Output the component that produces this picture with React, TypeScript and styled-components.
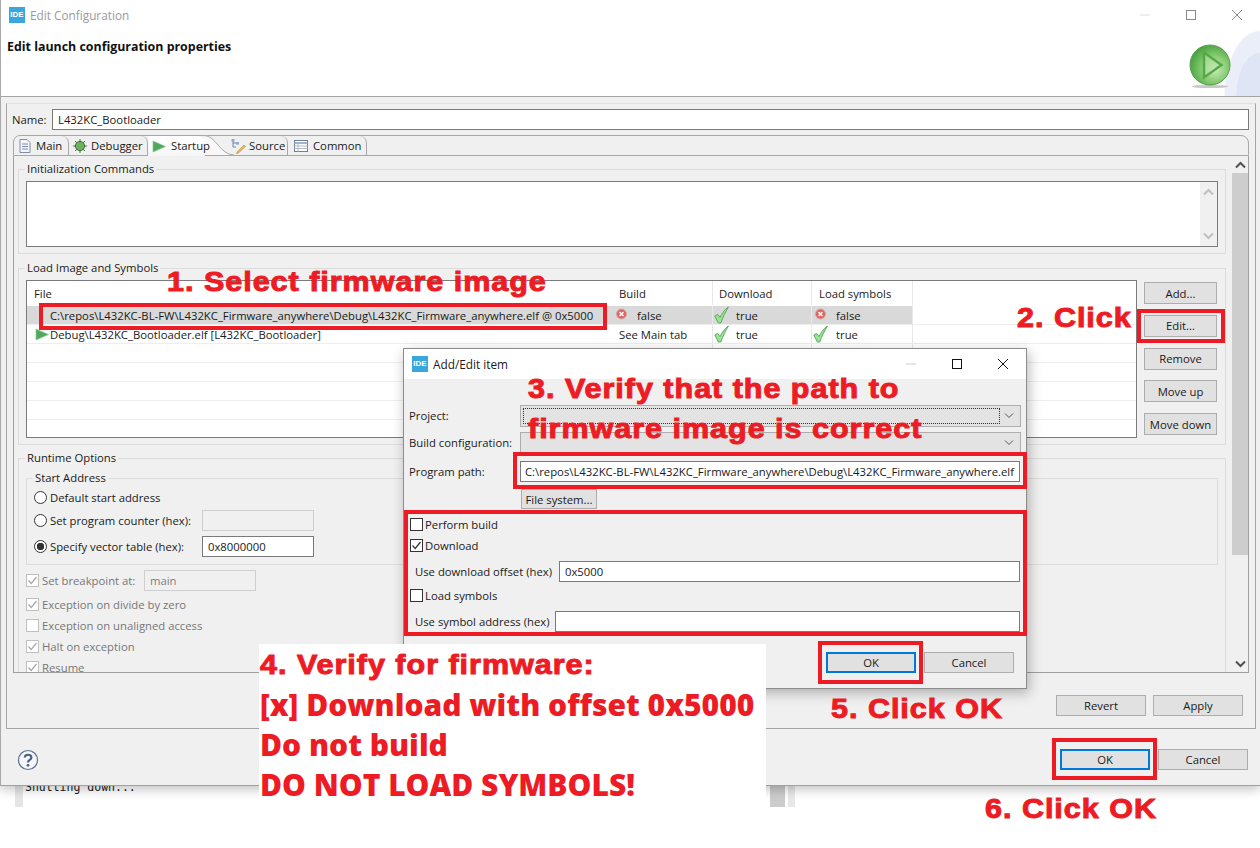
import React from 'react';
import styled, { createGlobalStyle } from 'styled-components';

const GlobalStyle = createGlobalStyle`
  html, body { margin: 0; padding: 0; background: #fff; }
  * { box-sizing: border-box; }
`;

const Page = styled.div`
  position: relative;
  width: 1260px;
  height: 848px;
  overflow: hidden;
  background: #fff;
  color: #1a1a1a;
  font-family: "Open Sans", "Liberation Sans", sans-serif;
  font-size: 11.3px;
`;

/* ---- what shows behind the window ---- */
const BackStrip = styled.div<{ $x: number; $w: number; $c: string }>`
  position: absolute;
  left: ${p => p.$x}px;
  top: 780px;
  width: ${p => p.$w}px;
  height: 27px;
  background: ${p => p.$c};
`;

const ConsoleText = styled.div`
  position: absolute;
  left: 25px;
  top: 780px;
  font-family: "DejaVu Sans Mono", monospace;
  font-size: 11.5px;
  line-height: 15px;
`;

/* ---- main window ---- */
const Window = styled.div`
  position: absolute;
  left: 0;
  top: 0;
  width: 1260px;
  height: 786px;
  display: flex;
  flex-direction: column;
  background: #fff;
  border-left: 1px solid #a8a8a8;
  border-bottom: 1px solid #a0a0a0;
  box-shadow: 0 4px 10px rgba(0, 0, 0, 0.22);
`;

const TitleBar = styled.div<{ $h: number }>`
  height: ${p => p.$h}px;
  flex: none;
  display: flex;
  align-items: center;
  background: #fff;
`;

const AppBadge = styled.div`
  width: 16px;
  height: 16px;
  flex: none;
  margin-left: 8px;
  background: #3aa7dc;
  color: #fff;
  font-family: "Liberation Sans", sans-serif;
  font-size: 8px;
  font-weight: 700;
  line-height: 16px;
  text-align: center;
`;

const TitleText = styled.span<{ $dim?: boolean }>`
  margin-left: 5px;
  flex: 1;
  color: ${p => (p.$dim ? '#9a9a9a' : '#1a1a1a')};
  font-size: 11.8px;
`;

const WinButton = styled.svg`
  width: 46px;
  height: 16px;
  flex: none;
`;

const Banner = styled.div`
  height: 67px;
  flex: none;
  display: flex;
  justify-content: space-between;
  padding: 9px 28px 0 6px;
  border-bottom: 1px solid #a4a4a4;
  background:
    radial-gradient(ellipse 36px 66px at 100% 100%, #dfe5f4 0 65%, #eaeef8 66% 97%, #fff 100%);
`;

const BannerTitle = styled.div`
  font-weight: 700;
  font-size: 12.4px;
  line-height: 16px;
  color: #111;
`;

const Body = styled.div`
  flex: 1;
  display: flex;
  flex-direction: column;
  background: #f0f0f0;
  padding: 6px 0 0 5px;
`;

const OuterPanel = styled.div`
  width: 1250px;
  height: 626px;
  flex: none;
  display: flex;
  flex-direction: column;
  padding: 5px 6px 0;
  border: 1px solid #a4a4a4;
  border-top-color: #e0e0e0;
`;

const NameRow = styled.div`
  display: flex;
  align-items: center;
  height: 21px;
  margin-bottom: 5px;
`;

const NameLabel = styled.span`
  width: 40px;
  margin-left: -1px;
  flex: none;
`;

const TextField = styled.div<{ $w?: number; $h?: number; $off?: boolean }>`
  ${p => (p.$w ? `width: ${p.$w}px; flex: none;` : 'flex: 1;')}
  height: ${p => p.$h ?? 21}px;
  padding: 0 5px;
  display: flex;
  align-items: center;
  white-space: nowrap;
  overflow: hidden;
  background: ${p => (p.$off ? '#f0f0f0' : '#fff')};
  border: 1px solid ${p => (p.$off ? '#cfcfcf' : '#7a7a7a')};
  color: ${p => (p.$off ? '#7d7d7d' : '#1a1a1a')};
`;

/* ---- tabs ---- */
const TabStrip = styled.div`
  height: 21px;
  flex: none;
  display: flex;
  border: 1px solid #a8a8a8;
  border-radius: 7px 8px 0 0;
  background: #f0f0f0;
`;

const Tab = styled.div<{ $w: number; $pad: number; $gap: number; $active?: boolean }>`
  position: relative;
  width: ${p => p.$w}px;
  flex: none;
  display: flex;
  align-items: center;
  gap: ${p => p.$gap}px;
  padding-left: ${p => p.$pad}px;
  padding-bottom: ${p => (p.$active ? 1 : 0)}px;
  border-right: 1px solid ${p => (p.$active ? 'transparent' : '#a8a8a8')};
  border-radius: 0 7px 0 0;
  height: ${p => (p.$active ? 20 : 19)}px;
  white-space: nowrap;
  background: ${p => (p.$active ? 'linear-gradient(#fff, #f6f6f6)' : 'transparent')};
`;

const TabLabel = styled.span`
  position: relative;
  z-index: 2;
`;

const TabCurve = styled.svg`
  position: absolute;
  left: 100%;
  top: -1px;
  width: 30px;
  height: 21px;
  z-index: 1;
`;

const TabIcon = styled.svg`
  width: 16px;
  height: 16px;
  flex: none;
  position: relative;
  z-index: 2;
`;

const Folder = styled.div`
  flex: none;
  height: 517px;
  display: flex;
  border: 1px solid #a0a0a0;
  border-top: 0;
`;

const Scroller = styled.div`
  flex: 1;
  min-width: 0;
  height: 516px;
  overflow: hidden;
  padding: 5px 6px 0 4px;
  display: flex;
  flex-direction: column;
`;

const Group = styled.fieldset<{ $h?: number; $gap?: number }>`
  margin: ${p => p.$gap ?? 0}px 0 0;
  padding: 0 7px;
  min-width: 0;
  flex: none;
  ${p => (p.$h ? `height: ${p.$h}px;` : '')}
  border: 1px solid #dcdcdc;
`;

const Legend = styled.legend`
  margin-left: -1px;
  padding: 0 2px;
  line-height: 16px;
  font-size: 11.3px;
`;

const CommandBox = styled.div`
  height: 66px;
  margin-top: 4px;
  display: flex;
  justify-content: flex-end;
  background: #fff;
  border: 1px solid #7a7a7a;
`;

const SmallBar = styled.div`
  width: 17px;
  display: flex;
  flex-direction: column;
  justify-content: space-between;
  align-items: center;
  padding: 6px 0;
  background: #f0f0f0;
`;

const Arrow = styled.svg`
  width: 11px;
  height: 8px;
  display: block;
`;

const MainBar = styled.div`
  width: 16px;
  flex: none;
  display: flex;
  flex-direction: column;
  align-items: stretch;
  background: #f0f0f0;
`;

const BarEnd = styled.div<{ $bottom?: boolean }>`
  height: 17px;
  display: flex;
  align-items: center;
  justify-content: center;
  ${p => (p.$bottom ? 'margin-top: auto;' : '')}
`;

const BarThumb = styled.div`
  height: 382px;
  background: #cdcdcd;
`;

/* ---- load image table ---- */
const LoadArea = styled.div`
  display: flex;
  gap: 7px;
  margin-top: 4px;
  padding-bottom: 6px;
`;

const Table = styled.div`
  width: 1111px;
  height: 158px;
  flex: none;
  overflow: hidden;
  background: #fff;
  border: 1px solid #7a7a7a;
`;

const TableRow = styled.div<{ $h?: number }>`
  height: ${p => p.$h ?? 19}px;
  display: grid;
  grid-template-columns: 585px 101px 99px 101px 1fr;
  border-bottom: 1px solid ${p => (p.$h ? 'transparent' : '#eeeeee')};
`;

const Cell = styled.div<{ $pad?: number; $gap?: number; $selected?: boolean; $noLine?: boolean }>`
  display: flex;
  align-items: center;
  gap: ${p => p.$gap ?? 7}px;
  padding-left: ${p => p.$pad ?? 6}px;
  white-space: nowrap;
  overflow: hidden;
  background: ${p => (p.$selected ? '#d9d9d9' : 'transparent')};
  border-right: 1px solid ${p => (p.$noLine ? 'transparent' : '#e8e8e8')};
`;

const StateIcon = styled.svg`
  width: 15px;
  height: 18px;
  flex: none;
`;

const ButtonColumn = styled.div`
  display: flex;
  flex-direction: column;
  gap: 10.8px;
  margin-top: 2px;
`;

const Button = styled.button<{ $w?: number; $focus?: boolean }>`
  width: ${p => p.$w ?? 90}px;
  height: ${p => (p.$w === 73 ? 22 : 21)}px;
  padding: 0;
  flex: none;
  font: inherit;
  color: #1a1a1a;
  background: #e1e1e1;
  border: ${p => (p.$focus ? '2px solid #0078d7' : '1px solid #adadad')};
`;

/* ---- runtime options ---- */
const InnerGroup = styled.fieldset`
  margin: 4px 0 0;
  padding: 3px 7px 7px;
  min-width: 0;
  border: 1px solid #dcdcdc;
  display: flex;
  flex-direction: column;
  gap: 5px;
`;

const OptionRow = styled.div<{ $tall?: boolean; $off?: boolean }>`
  display: flex;
  align-items: center;
  height: ${p => (p.$tall ? 21 : 16)}px;
  flex: none;
  color: ${p => (p.$off ? '#777' : 'inherit')};
`;

const Radio = styled.span<{ $on?: boolean }>`
  width: 13px;
  height: 13px;
  flex: none;
  margin-right: 3px;
  border-radius: 50%;
  border: 1px solid #333;
  background: ${p => (p.$on ? 'radial-gradient(circle, #333 0 3.5px, #fff 4px)' : '#fff')};
`;

const Check = styled.span<{ $off?: boolean; $gap?: number }>`
  width: 13px;
  height: 13px;
  flex: none;
  margin-right: ${p => p.$gap ?? 3}px;
  display: flex;
  align-items: center;
  justify-content: center;
  background: #fff;
  border: 1px solid ${p => (p.$off ? '#c0c0c0' : '#333')};
`;

const CheckMark = styled.svg`
  width: 11px;
  height: 11px;
`;

const OptionLabel = styled.span<{ $w?: number }>`
  white-space: nowrap;
  ${p => (p.$w ? `width: ${p.$w}px; flex: none;` : '')}
`;

const ChecksBlock = styled.div`
  margin-top: 5px;
  display: flex;
  flex-direction: column;
  gap: 5px;
`;

const ActionRow = styled.div`
  display: flex;
  justify-content: flex-end;
  gap: 7px;
  margin-top: 22px;
  padding-right: 6px;
`;

const Footer = styled.div`
  margin-top: 20px;
  display: flex;
  justify-content: space-between;
  align-items: center;
  padding: 0 12px 0 11px;
  height: 21px;
`;

const HelpIcon = styled.svg`
  width: 22px;
  height: 22px;
`;

const FooterButtons = styled.div`
  display: flex;
  gap: 8px;
`;

/* ---- add/edit dialog ---- */
const Dialog = styled.div`
  position: absolute;
  left: 403px;
  top: 348px;
  width: 624px;
  height: 341px;
  display: flex;
  flex-direction: column;
  background: #f0f0f0;
  border: 1px solid #8c8c8c;
  box-shadow: 2px 4px 12px rgba(0, 0, 0, 0.28);
`;

const DialogForm = styled.div`
  display: grid;
  grid-template-columns: 111px 1fr;
  padding: 26px 5px 0 5px;
  align-items: center;
`;

const FormLabel = styled.span<{ $h: number; $gap?: number }>`
  height: ${p => p.$h}px;
  margin-bottom: ${p => p.$gap ?? 0}px;
  padding-bottom: 1px;
  display: flex;
  align-items: center;
  white-space: nowrap;
`;

const Combo = styled.div<{ $h: number; $gap: number }>`
  height: ${p => p.$h}px;
  margin-bottom: ${p => p.$gap}px;
  display: flex;
  align-items: center;
  padding: 2px;
  background: #e3e3e3;
  border: 1px solid #adadad;
`;

const ComboFocus = styled.div<{ $dotted?: boolean }>`
  flex: 1;
  align-self: stretch;
  border: 1px ${p => (p.$dotted ? 'dotted #333' : 'solid transparent')};
`;

const ComboArrow = styled.svg`
  width: 18px;
  height: 8px;
  flex: none;
`;

const PathField = styled(TextField)`
  margin-bottom: 7px;
  margin-right: 1px;
  padding: 0 4px;
`;

const FileButton = styled.button`
  grid-column: 2;
  width: 76px;
  height: 20px;
  padding: 0;
  font: inherit;
  color: #1a1a1a;
  background: #e1e1e1;
  border: 1px solid #adadad;
  margin-left: 1px;
`;

const DialogOptions = styled.div`
  margin-top: 7px;
  padding: 0 6px;
  display: flex;
  flex-direction: column;
  gap: 5px;
`;

const DialogField = styled.div`
  display: flex;
  align-items: center;
  height: 21px;
  margin: 3px 0 0 5px;
`;

const DialogFieldLabel = styled.span<{ $w: number }>`
  width: ${p => p.$w}px;
  flex: none;
  white-space: nowrap;
`;

const DialogButtons = styled.div`
  margin-top: 20px;
  padding-right: 12px;
  display: flex;
  justify-content: flex-end;
  gap: 8px;
`;

/* ---- annotations drawn on top ---- */
const Frame = styled.div<{ $x: number; $y: number; $w: number; $h: number }>`
  position: absolute;
  left: ${p => p.$x}px;
  top: ${p => p.$y}px;
  width: ${p => p.$w}px;
  height: ${p => p.$h}px;
  border: 4px solid #ed1c24;
`;

const Note = styled.div<{ $x: number; $y: number }>`
  position: absolute;
  left: ${p => p.$x}px;
  top: ${p => p.$y}px;
  font-family: "Liberation Sans", Arial, sans-serif;
  font-size: 28px;
  font-weight: 700;
  line-height: 32px;
  letter-spacing: 0.9px;
  white-space: nowrap;
  color: #ed1c24;
  -webkit-text-stroke: 1px #ed1c24;
  transform: scaleX(1.09);
  transform-origin: left center;
`;

const NoteBox = styled.div`
  position: absolute;
  left: 259px;
  top: 644px;
  width: 507px;
  height: 164px;
  padding: 1px 0 0 1px;
  background: #fff;
  font-family: "Open Sans", sans-serif;
  font-size: 30px;
  font-weight: 800;
  line-height: 40px;
  white-space: nowrap;
  color: #ed1c24;
`;

const NoteBoxHead = styled.div`
  height: 40px;
  font-family: "Liberation Sans", Arial, sans-serif;
  font-size: 28px;
  font-weight: 700;
  letter-spacing: 0.9px;
  -webkit-text-stroke: 1px #ed1c24;
  transform: scaleX(1.09);
  transform-origin: left center;
`;

const PlayBadge = styled.svg`
  width: 44px;
  height: 46px;
  margin-top: 5px;
`;

const ChevronUp = ({ color = '#505050' }: { color?: string }) => (
  <Arrow viewBox="0 0 11 8">
    <path d="M1 6.5 L5.5 2 L10 6.5" fill="none" stroke={color} strokeWidth="2" />
  </Arrow>
);

const ChevronDown = ({ color = '#505050' }: { color?: string }) => (
  <Arrow viewBox="0 0 11 8">
    <path d="M1 1.5 L5.5 6 L10 1.5" fill="none" stroke={color} strokeWidth="2" />
  </Arrow>
);

const CrossState = () => (
  <StateIcon viewBox="0 0 15 18">
    <circle cx="6.5" cy="8" r="5" fill="#e2625f" stroke="#d2a8a8" />
    <path d="M4.5 6 L8.5 10 M8.5 6 L4.5 10" stroke="#fff" strokeWidth="1.5" />
  </StateIcon>
);

const TickState = () => (
  <StateIcon viewBox="0 0 15 18">
    <path d="M0.8 10 L3.6 8.4 L6 11.6 C8 7.5 10.5 3.8 14.4 1 C11.5 6 9 11 6.8 17 L4.4 17 Z" fill="#96e696" stroke="#4a9a4a" strokeWidth="0.8" />
  </StateIcon>
);

const Tick = ({ color }: { color: string }) => (
  <CheckMark viewBox="0 0 11 11">
    <path d="M1.5 5.5 L4.2 8.5 L9.5 2" fill="none" stroke={color} strokeWidth="1.2" />
  </CheckMark>
);

const PlayIcon = () => (
  <TabIcon viewBox="0 0 16 16">
    <path d="M2 3 L14.5 8.5 L2 14 Z" fill="#4fa85c" stroke="#8fc79a" strokeWidth="0.7" />
  </TabIcon>
);

const Header = () => (
  <>
    <TitleBar $h={30}>
      <AppBadge>IDE</AppBadge>
      <TitleText $dim>Edit Configuration</TitleText>
      <WinButton viewBox="0 0 46 16">
        <path d="M18 8 H28" stroke="#dcdcdc" />
      </WinButton>
      <WinButton viewBox="0 0 46 16">
        <rect x="18.5" y="3.5" width="9" height="9" fill="none" stroke="#8a8a8a" />
      </WinButton>
      <WinButton viewBox="0 0 46 16">
        <path d="M18 3 L28 13 M28 3 L18 13" stroke="#8a8a8a" />
      </WinButton>
    </TitleBar>
    <Banner>
      <BannerTitle>Edit launch configuration properties</BannerTitle>
      <PlayBadge viewBox="0 0 44 46">
        <defs>
          <radialGradient id="ball" cx="0.62" cy="0.6" r="0.7">
            <stop offset="0" stopColor="#cdeeb8" />
            <stop offset="0.55" stopColor="#79c464" />
            <stop offset="1" stopColor="#3c9a3a" />
          </radialGradient>
        </defs>
        <ellipse cx="22" cy="42.5" rx="18" ry="1.6" fill="#c8c8c8" />
        <circle cx="22" cy="21" r="20" fill="url(#ball)" stroke="#5c9c52" />
        <path d="M16 8.5 L33.5 21 L16 33.5 Z" fill="#b7e3a4" fillOpacity="0.5" stroke="#55a84a" strokeWidth="2.4" />
      </PlayBadge>
    </Banner>
  </>
);

const Tabs = () => (
  <TabStrip>
    <Tab $w={55} $pad={3} $gap={3}>
      <TabIcon viewBox="0 0 16 16">
        <path d="M3 1.5 H10 L13 4.5 V14.5 H3 Z" fill="#f4f6fb" stroke="#7f8ea8" />
        <path d="M5 6 H11 M5 8.5 H11 M5 11 H11" stroke="#7c8cac" />
      </TabIcon>
      <TabLabel>Main</TabLabel>
    </Tab>
    <Tab $w={79} $pad={3} $gap={3}>
      <TabIcon viewBox="0 0 16 16">
        <path d="M8 1 V15 M1 8 H15 M3 3 L13 13 M13 3 L3 13" stroke="#48704a" />
        <circle cx="8" cy="8" r="4.6" fill="#6bb25a" stroke="#3d6e3a" />
      </TabIcon>
      <TabLabel>Debugger</TabLabel>
    </Tab>
    <Tab $w={57} $pad={3} $gap={4} $active>
      <PlayIcon />
      <TabLabel>Startup</TabLabel>
      <TabCurve viewBox="0 0 30 21">
        <path d="M0 0.5 C12 0.5 16 20 30 20 L0 20 Z" fill="#f8f8f8" />
        <path d="M0 0.5 C12 0.5 16 20 30 20" fill="none" stroke="#a8a8a8" />
      </TabCurve>
    </Tab>
    <Tab $w={83} $pad={25} $gap={3}>
      <TabIcon viewBox="0 0 16 16">
        <path d="M3 1 V9 H6 M3 5 H6" fill="none" stroke="#6b86a8" />
        <rect x="1.5" y="1" width="3" height="2.6" fill="#8fa8c8" />
        <rect x="6" y="4" width="3" height="2.6" fill="#8fa8c8" />
        <path d="M7 14 L14 7 L15.5 8.5 L8.5 15 L6.5 15.5 Z" fill="#e8b860" stroke="#b98b3c" strokeWidth="0.6" />
      </TabIcon>
      <TabLabel>Source</TabLabel>
    </Tab>
    <Tab $w={79} $pad={5} $gap={4}>
      <TabIcon viewBox="0 0 16 16">
        <rect x="1.5" y="2.5" width="13" height="11" fill="#fff" stroke="#6f8098" />
        <path d="M1.5 5 H14.5" stroke="#9fb2ca" strokeWidth="2" />
        <path d="M1.5 8 H14.5 M1.5 10.5 H14.5 M5 5 V13.5" stroke="#b0bccc" />
      </TabIcon>
      <TabLabel>Common</TabLabel>
    </Tab>
  </TabStrip>
);

const LoadTable = () => (
  <Table>
    <TableRow $h={25}>
      <Cell $pad={7} $noLine>File</Cell>
      <Cell $pad={7}>Build</Cell>
      <Cell>Download</Cell>
      <Cell $pad={7}>Load symbols</Cell>
      <Cell $noLine />
    </TableRow>
    <TableRow>
      <Cell $selected $pad={23} $noLine>C:\repos\L432KC-BL-FW\L432KC_Firmware_anywhere\Debug\L432KC_Firmware_anywhere.elf @ 0x5000</Cell>
      <Cell $selected $pad={3}><CrossState />false</Cell>
      <Cell $selected $pad={1}><TickState />true</Cell>
      <Cell $selected $pad={2}><CrossState />false</Cell>
      <Cell $noLine />
    </TableRow>
    <TableRow>
      <Cell $pad={7} $gap={0} $noLine>
        <PlayIcon />
        Debug\L432KC_Bootloader.elf [L432KC_Bootloader]
      </Cell>
      <Cell $pad={7}>See Main tab</Cell>
      <Cell $pad={1}><TickState />true</Cell>
      <Cell $pad={1} $gap={8}><TickState />true</Cell>
      <Cell $noLine />
    </TableRow>
    {[0, 1, 2, 3, 4].map(i => (
      <TableRow key={i}>
        <Cell $noLine />
        <Cell />
        <Cell />
        <Cell />
        <Cell $noLine />
      </TableRow>
    ))}
  </Table>
);

const EditDialog = () => (
  <Dialog>
    <TitleBar $h={30}>
      <AppBadge>IDE</AppBadge>
      <TitleText>Add/Edit item</TitleText>
      <WinButton viewBox="0 0 46 16">
        <path d="M18 8 H28" stroke="#cccccc" />
      </WinButton>
      <WinButton viewBox="0 0 46 16">
        <rect x="18.5" y="3.5" width="9" height="9" fill="none" stroke="#111" />
      </WinButton>
      <WinButton viewBox="0 0 46 16">
        <path d="M18 3 L28 13 M28 3 L18 13" stroke="#111" />
      </WinButton>
    </TitleBar>
    <DialogForm>
      <FormLabel $h={22} $gap={5}>Project:</FormLabel>
      <Combo $h={22} $gap={5}>
        <ComboFocus $dotted />
        <ComboArrow viewBox="0 0 18 8"><path d="M5 1.5 L9 5.5 L13 1.5" fill="none" stroke="#555" /></ComboArrow>
      </Combo>
      <FormLabel $h={22} $gap={7}>Build configuration:</FormLabel>
      <Combo $h={22} $gap={7}>
        <ComboFocus />
        <ComboArrow viewBox="0 0 18 8"><path d="M5 1.5 L9 5.5 L13 1.5" fill="none" stroke="#555" /></ComboArrow>
      </Combo>
      <FormLabel $h={21} $gap={7}>Program path:</FormLabel>
      <PathField>C:\repos\L432KC-BL-FW\L432KC_Firmware_anywhere\Debug\L432KC_Firmware_anywhere.elf</PathField>
      <FileButton>File system...</FileButton>
    </DialogForm>
    <DialogOptions>
      <OptionRow><Check $gap={2} />Perform build</OptionRow>
      <OptionRow><Check $gap={2}><Tick color="#333" /></Check>Download</OptionRow>
      <DialogField>
        <DialogFieldLabel $w={144}>Use download offset (hex)</DialogFieldLabel>
        <TextField>0x5000</TextField>
      </DialogField>
      <OptionRow><Check $gap={2} />Load symbols</OptionRow>
      <DialogField>
        <DialogFieldLabel $w={140}>Use symbol address (hex)</DialogFieldLabel>
        <TextField />
      </DialogField>
    </DialogOptions>
    <DialogButtons>
      <Button $focus>OK</Button>
      <Button>Cancel</Button>
    </DialogButtons>
  </Dialog>
);

const App: React.FC = () => (
  <Page>
    <GlobalStyle />
    <BackStrip $x={15} $w={8} $c="#e6e6e6" />
    <BackStrip $x={770} $w={15} $c="#cccccc" />
    <BackStrip $x={788} $w={7} $c="#e8e8e8" />
    <ConsoleText>Shutting down...</ConsoleText>

    <Window>
      <Header />
      <Body>
        <OuterPanel>
          <NameRow>
            <NameLabel>Name:</NameLabel>
            <TextField>L432KC_Bootloader</TextField>
          </NameRow>
          <Tabs />
          <Folder>
            <Scroller>
              <Group $h={93}>
                <Legend>Initialization Commands</Legend>
                <CommandBox>
                  <SmallBar>
                    <ChevronUp color="#c0c0c0" />
                    <ChevronDown color="#c0c0c0" />
                  </SmallBar>
                </CommandBox>
              </Group>
              <Group $gap={6}>
                <Legend>Load Image and Symbols</Legend>
                <LoadArea>
                  <LoadTable />
                  <ButtonColumn>
                    <Button $w={73}>Add...</Button>
                    <Button $w={73}>Edit...</Button>
                    <Button $w={73}>Remove</Button>
                    <Button $w={73}>Move up</Button>
                    <Button $w={73}>Move down</Button>
                  </ButtonColumn>
                </LoadArea>
              </Group>
              <Group $gap={5} $h={240}>
                <Legend>Runtime Options</Legend>
                <InnerGroup>
                  <Legend>Start Address</Legend>
                  <OptionRow><Radio />Default start address</OptionRow>
                  <OptionRow $tall><Radio /><OptionLabel $w={152}>Set program counter (hex):</OptionLabel><TextField $w={112} $off /></OptionRow>
                  <OptionRow $tall><Radio $on /><OptionLabel $w={152}>Specify vector table (hex):</OptionLabel><TextField $w={112}>0x8000000</TextField></OptionRow>
                </InnerGroup>
                <ChecksBlock>
                  <OptionRow $tall $off><Check $off><Tick color="#a8a8a8" /></Check><OptionLabel $w={102}>Set breakpoint at:</OptionLabel><TextField $w={112} $off>main</TextField></OptionRow>
                  <OptionRow $off><Check $off><Tick color="#a8a8a8" /></Check>Exception on divide by zero</OptionRow>
                  <OptionRow $off><Check $off />Exception on unaligned access</OptionRow>
                  <OptionRow $off><Check $off><Tick color="#a8a8a8" /></Check>Halt on exception</OptionRow>
                  <OptionRow $off><Check $off><Tick color="#a8a8a8" /></Check>Resume</OptionRow>
                </ChecksBlock>
              </Group>
            </Scroller>
            <MainBar>
              <BarEnd><ChevronUp /></BarEnd>
              <BarThumb />
              <BarEnd $bottom><ChevronDown /></BarEnd>
            </MainBar>
          </Folder>
          <ActionRow>
            <Button>Revert</Button>
            <Button>Apply</Button>
          </ActionRow>
        </OuterPanel>
        <Footer>
          <HelpIcon viewBox="0 0 22 22">
            <circle cx="11" cy="11" r="9.5" fill="#f4f6fa" stroke="#5c6f90" strokeWidth="1.2" />
            <path d="M7.8 8.5 C7.8 4.8 14.4 4.8 14.4 8.5 C14.4 11 11 10.8 11 13.4" fill="none" stroke="#4b5f82" strokeWidth="2.2" />
            <circle cx="11" cy="16.3" r="1.4" fill="#4b5f82" />
          </HelpIcon>
          <FooterButtons>
            <Button $focus>OK</Button>
            <Button>Cancel</Button>
          </FooterButtons>
        </Footer>
      </Body>
    </Window>

    <EditDialog />

    <Frame $x={39} $y={303} $w={568} $h={27} />
    <Frame $x={1137} $y={309} $w={88} $h={34} />
    <Frame $x={513} $y={452} $w={514} $h={37} />
    <Frame $x={404} $y={510} $w={623} $h={126} />
    <Frame $x={818} $y={641} $w={105} $h={43} />
    <Frame $x={1052} $y={738} $w={105} $h={42} />

    <Note $x={167} $y={266}>1. Select firmware image</Note>
    <Note $x={1017} $y={302}>2. Click</Note>
    <Note $x={528} $y={373}>3. Verify that the path to</Note>
    <Note $x={528} $y={413}>firmware image is correct</Note>
    <Note $x={831} $y={693}>5. Click OK</Note>
    <Note $x={985} $y={793}>6. Click OK</Note>

    <NoteBox>
      <NoteBoxHead>4. Verify for firmware:</NoteBoxHead>
      [x] Download with offset 0x5000<br />
      Do not build<br />
      DO NOT LOAD SYMBOLS!
    </NoteBox>
  </Page>
);

export default App;
